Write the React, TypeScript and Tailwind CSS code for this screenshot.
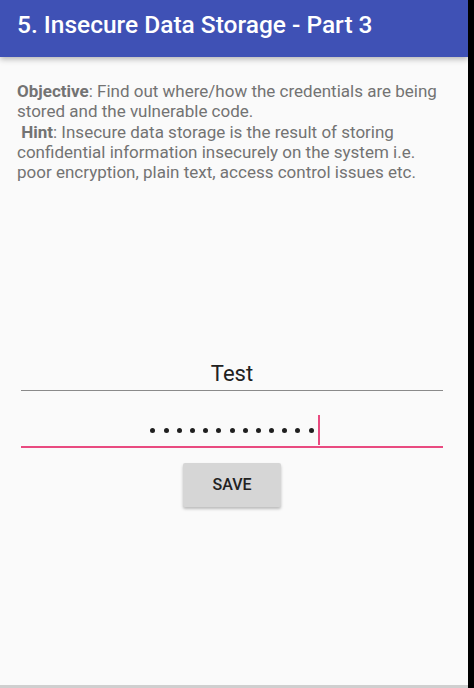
export default function App() {
  const dots = Array.from({ length: 13 })

  return (
    <div className="flex h-screen w-screen overflow-hidden bg-black font-['Roboto',sans-serif]">
      <div className="flex w-[468px] shrink-0 flex-col">
        <div className="flex h-[685px] flex-col bg-[#fafafa]">
          <header className="relative z-10 flex h-[57px] items-center bg-[#3f51b5] px-[17px] pb-[6px] shadow-[0_2px_6px_rgba(0,0,0,0.3)]">
            <h1 className="text-[24.5px] font-medium text-white">
              5. Insecure Data Storage - Part 3
            </h1>
          </header>

          <div className="px-[17px] pt-[24px]">
            <p className="text-[17px] leading-[20.3px] text-[#737373]">
              <b className="font-bold">Objective</b>: Find out where/how the
              credentials are being stored and the vulnerable code.
              <br />
              {'\u00a0'}
              <b className="font-bold">Hint</b>: Insecure data storage is the
              result of storing confidential information insecurely on the
              system i.e. poor encryption, plain text, access control issues
              etc.
            </p>
          </div>

          <form className="ml-[21px] mt-[174px] flex w-[422px] flex-col items-center">
            <div className="h-[35px] w-full border-b border-[#8a8a8a] text-center text-[22px] leading-[36px] text-[#212121]">
              Test
            </div>

            <div className="mt-[23px] flex h-[34px] w-full items-center justify-center border-b-2 border-[#e94a80]">
              <div className="relative flex items-center gap-[8.2px]">
                {dots.map((_, i) => (
                  <span
                    key={i}
                    className="h-[5px] w-[5px] rounded-full bg-[#1f1f1f]"
                  />
                ))}
                <span className="absolute left-full top-1/2 ml-[4px] h-[30px] w-[2px] -translate-y-1/2 bg-[#e94a80]" />
              </div>
            </div>

            <button
              type="button"
              className="mt-[15px] h-[44px] w-[98px] rounded-[2px] bg-[#d6d6d6] text-[16px] font-medium text-[#222] shadow-[0_2px_3px_rgba(0,0,0,0.25)]"
            >
              SAVE
            </button>
          </form>
        </div>
        <div className="h-[3px] bg-[#cfcfcf]" />
      </div>
      <div className="flex-1 bg-black" />
    </div>
  )
}
